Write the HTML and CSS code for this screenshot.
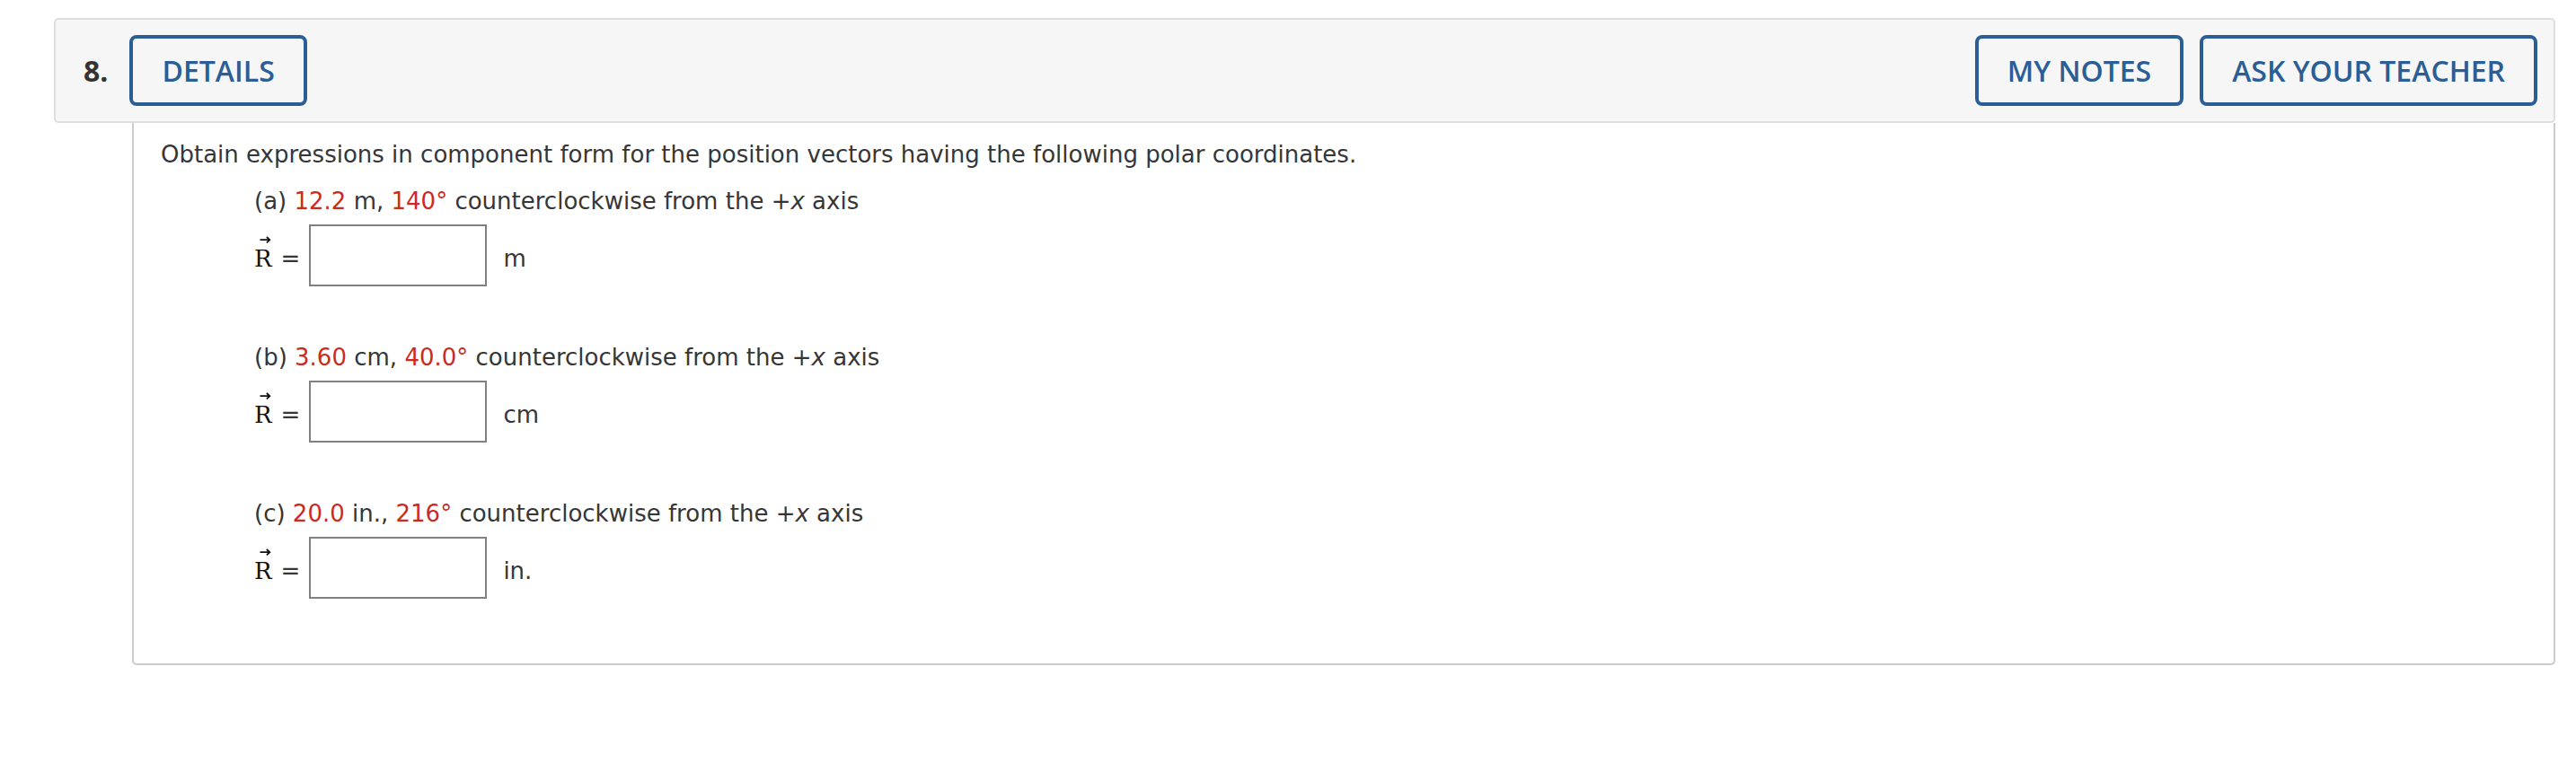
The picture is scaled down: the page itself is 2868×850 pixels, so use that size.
FILE: index.html
```html
<!DOCTYPE html>
<html lang="en">
<head>
<meta charset="utf-8">
<title>Question 8</title>
<link rel="stylesheet" href="styles.css">
</head>
<body>
<div class="question">
  <div class="q-header">
    <div class="q-left">
      <span class="q-num">8.</span>
      <button class="btn">DETAILS</button>
    </div>
    <div class="q-right">
      <button class="btn">MY NOTES</button>
      <button class="btn">ASK YOUR TEACHER</button>
    </div>
  </div>
  <div class="q-body">
    <p class="intro">Obtain expressions in component form for the position vectors having the following polar coordinates.</p>

    <div class="part">
      <p class="prompt">(a) <span class="red">12.2</span> m, <span class="red">140°</span> counterclockwise from the +<i>x</i> axis</p>
      <div class="answer">
        <span class="vec">R<svg class="arrow" viewBox="0 0 12 8" width="13" height="8"><path d="M0 4.2H10.5M7.4 1L10.8 4.2L7.4 7.4" fill="none" stroke="#111" stroke-width="1.8"/></svg></span>
        <span class="eq">=</span>
        <input class="field" type="text">
        <span class="unit">m</span>
      </div>
    </div>

    <div class="part">
      <p class="prompt">(b) <span class="red">3.60</span> cm, <span class="red">40.0°</span> counterclockwise from the +<i>x</i> axis</p>
      <div class="answer">
        <span class="vec">R<svg class="arrow" viewBox="0 0 12 8" width="13" height="8"><path d="M0 4.2H10.5M7.4 1L10.8 4.2L7.4 7.4" fill="none" stroke="#111" stroke-width="1.8"/></svg></span>
        <span class="eq">=</span>
        <input class="field" type="text">
        <span class="unit">cm</span>
      </div>
    </div>

    <div class="part">
      <p class="prompt">(c) <span class="red">20.0</span> in., <span class="red">216°</span> counterclockwise from the +<i>x</i> axis</p>
      <div class="answer">
        <span class="vec">R<svg class="arrow" viewBox="0 0 12 8" width="13" height="8"><path d="M0 4.2H10.5M7.4 1L10.8 4.2L7.4 7.4" fill="none" stroke="#111" stroke-width="1.8"/></svg></span>
        <span class="eq">=</span>
        <input class="field" type="text">
        <span class="unit">in.</span>
      </div>
    </div>
  </div>
</div>
</body>
</html>
```

FILE: styles.css
```css
* { box-sizing: border-box; }

html, body {
  margin: 0;
  padding: 0;
  background: #ffffff;
}

body {
  padding: 20px 23px 0 60px;
}

.question {
  width: 2785px;
}

.q-header {
  display: flex;
  justify-content: space-between;
  align-items: center;
  background: #f6f6f6;
  border: 2px solid #dedede;
  border-radius: 5px;
  padding: 17px 18px 17px 31px;
}

.q-left, .q-right {
  display: flex;
  align-items: center;
}

.q-right {
  gap: 18px;
}

.q-num {
  font-family: "Open Sans", "DejaVu Sans", sans-serif;
  font-weight: 700;
  font-size: 32px;
  color: #333333;
  margin-right: 24px;
}

.btn {
  font-family: "Open Sans", "DejaVu Sans", sans-serif;
  font-weight: 600;
  font-size: 32px;
  color: #2a5e94;
  background: transparent;
  border: 4px solid #2a5e94;
  border-radius: 8px;
  height: 79px;
  padding: 0 32px;
  line-height: 71px;
  margin: 0;
}

.q-body {
  margin-left: 87px;
  border: 2px solid #cccccc;
  border-top: none;
  border-radius: 0 0 5px 5px;
  padding: 16px 30px 72px 30px;
  font-family: "DejaVu Sans", Verdana, sans-serif;
  font-size: 26px;
  line-height: 38px;
  color: #363636;
}

.intro {
  margin: 0 0 14px 0;
}

.part {
  margin-left: 104px;
}

.part + .part {
  margin-top: 60px;
}

.prompt {
  margin: 0;
}

.red {
  color: #cc2a1f;
}

.answer {
  display: flex;
  align-items: center;
  margin-top: 7px;
}

.vec {
  position: relative;
  font-family: "DejaVu Serif", "Liberation Serif", serif;
  font-size: 26px;
  color: #111111;
  margin-top: 6px;
}

.arrow {
  position: absolute;
  left: 6px;
  top: -6px;
}

.eq {
  margin-left: 10px;
  margin-right: 10px;
  margin-top: 6px;
}

.field {
  width: 198px;
  height: 69px;
  border: 2px solid #808080;
  background: #ffffff;
  margin: 0;
  padding: 0;
  border-radius: 0;
}

.unit {
  margin-left: 18px;
  margin-top: 6px;
}
```
